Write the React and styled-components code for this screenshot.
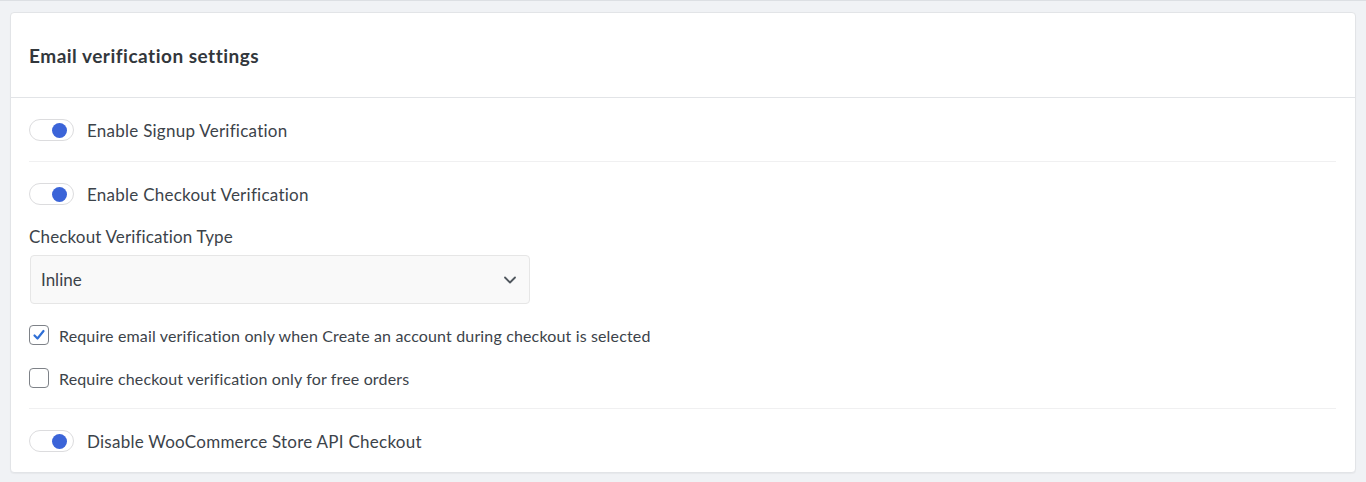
import styled, { createGlobalStyle } from "styled-components";

const GlobalStyle = createGlobalStyle`
    body {
        margin: 0;
        background: #f0f2f5;
        font-family: Lato, "Liberation Sans", sans-serif;
        color: #3c434a;
    }
    * { box-sizing: border-box; }
`
const Page = styled.div`
    padding: 11px 10px 10px 10px;
    border-top: 1px solid #dcdfe3;
`
const Card = styled.div`
    background: #fff;
    border: 1px solid #e2e4e7;
    border-radius: 4px;
    box-shadow: 0 1px 1px rgba(0, 0, 0, 0.04);
`
const Header = styled.div`
    height: 85px;
    display: flex;
    align-items: center;
    padding: 1px 18px 0;
    border-bottom: 1px solid #e2e4e7;
`
const Title = styled.h2`
    margin: 0;
    font-size: 19px;
    font-weight: 700;
    letter-spacing: 0.5px;
    color: #32373c;
`
const Body = styled.div`
    padding: 0 19px 0 18px;
`
const Section = styled.div`
    padding: ${p => p.pad || "21px 0"};
    border-bottom: ${p => p.last ? "none" : "1px solid #f0f0f1"};
    display: flex;
    flex-direction: column;
`
const ToggleRow = styled.label`
    display: flex;
    align-items: center;
    gap: 13px;
    font-size: 17px;
    letter-spacing: 0.25px;
    color: #3c434a;
`
const Switch = styled.span`
    width: 45px;
    height: 22px;
    border: 1px solid #dcdcde;
    border-radius: 11px;
    background: #fff;
    display: flex;
    align-items: center;
    justify-content: ${p => p.on ? "flex-end" : "flex-start"};
    padding: 0 6px;
`
const Knob = styled.span`
    width: 15px;
    height: 15px;
    border-radius: 50%;
    background: #3b64d8;
`
const FieldLabel = styled.div`
    font-size: 17px;
    letter-spacing: 0.15px;
    margin-top: 21px;
    margin-bottom: 8px;
`
const Select = styled.div`
    width: 500px;
    height: 49px;
    margin-left: 1px;
    background: #f9f9f9;
    border: 1px solid #e6e6e6;
    border-radius: 4px;
    display: flex;
    align-items: center;
    justify-content: space-between;
    padding: 0 11px 0 10px;
    font-size: 17px;
`
const CheckRow = styled.label`
    display: flex;
    align-items: center;
    gap: 10px;
    font-size: 16px;
    letter-spacing: 0.15px;
    margin-top: ${p => p.mt || "0"};
`
const Box = styled.span`
    width: 20px;
    height: 20px;
    flex: none;
    border: 1.5px solid #7e8288;
    border-radius: 4px;
    display: flex;
    align-items: center;
    justify-content: center;
    background: #fff;
`

const Toggle = ({ children }) => (
    <ToggleRow>
        <Switch on><Knob /></Switch>
        {children}
    </ToggleRow>
)

const Check = ({ checked, mt, children }) => (
    <CheckRow mt={mt}>
        <Box>
            {checked && (
                <svg width="14" height="14" viewBox="0 0 14 14">
                    <path d="M2.5 7.5 L5.5 10.5 L11.5 3" fill="none" stroke="#2f6fd6" strokeWidth="2.2" strokeLinecap="round" strokeLinejoin="round" />
                </svg>
            )}
        </Box>
        {children}
    </CheckRow>
)

const App = () => {
    return (
        <Page>
            <GlobalStyle />
            <Card>
                <Header>
                    <Title>Email verification settings</Title>
                </Header>
                <Body>
                    <Section pad="21px 0 20px">
                        <Toggle>Enable Signup Verification</Toggle>
                    </Section>
                    <Section pad="21px 0 20px">
                        <Toggle>Enable Checkout Verification</Toggle>
                        <FieldLabel>Checkout Verification Type</FieldLabel>
                        <Select>
                            Inline
                            <svg width="16" height="16" viewBox="0 0 16 16">
                                <path d="M3 5.5 L8 10.5 L13 5.5" fill="none" stroke="#50575e" strokeWidth="1.8" strokeLinecap="round" strokeLinejoin="round" />
                            </svg>
                        </Select>
                        <Check checked mt="21px">Require email verification only when Create an account during checkout is selected</Check>
                        <Check mt="23px">Require checkout verification only for free orders</Check>
                    </Section>
                    <Section pad="21px 0 20px" last>
                        <Toggle>Disable WooCommerce Store API Checkout</Toggle>
                    </Section>
                </Body>
            </Card>
        </Page>
    )
}

export default App;
